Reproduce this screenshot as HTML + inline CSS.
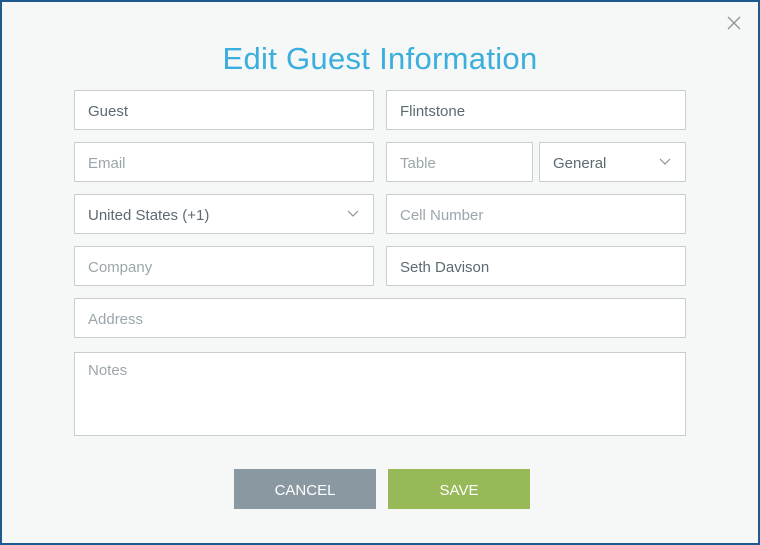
<!DOCTYPE html>
<html><head><style>
*{box-sizing:border-box;margin:0;padding:0}
body{width:760px;height:545px;background:#1d5a8e;font-family:"Liberation Sans",sans-serif;position:relative;overflow:hidden}
.m{position:absolute;left:2px;top:2px;width:756px;height:541px;background:#f6f8f8}
.t{position:absolute;left:0;width:760px;top:41px;text-align:center;font-size:31px;color:#3aaedc;font-weight:300;letter-spacing:0.3px}
.f{position:absolute;background:#fff;border:1px solid #c8cdcf;font-size:15px;color:#5c6a72;padding-left:13px;line-height:42px}
.p{color:#9ba6ac}
.ch{position:absolute;right:14px;top:15px;width:10px;height:10px}
.b{position:absolute;top:469px;height:40px;width:142px;color:#fff;font-size:15px;text-align:center;line-height:43px}
.x{position:absolute;left:727px;top:16px}
</style></head><body>
<div class="m"></div>
<svg class="x" width="14" height="14" viewBox="0 0 14 14"><path d="M1 1L13 13M13 1L1 13" stroke="#8a9499" stroke-width="1.3"/></svg>
<div class="t">Edit Guest Information</div>
<div class="f" style="left:74px;top:90px;width:300px;height:40px">Guest</div>
<div class="f" style="left:386px;top:90px;width:300px;height:40px">Flintstone</div>
<div class="f p" style="left:74px;top:142px;width:300px;height:40px">Email</div>
<div class="f p" style="left:386px;top:142px;width:147px;height:40px">Table</div>
<div class="f" style="left:539px;top:142px;width:147px;height:40px">General<svg class="ch" viewBox="0 0 12 8" style="width:12px;height:8px;top:15px"><path d="M1 1L6 6L11 1" fill="none" stroke="#8a9499" stroke-width="1.2"/></svg></div>
<div class="f" style="left:74px;top:194px;width:300px;height:40px">United States (+1)<svg class="ch" viewBox="0 0 12 8" style="width:12px;height:8px;top:15px"><path d="M1 1L6 6L11 1" fill="none" stroke="#8a9499" stroke-width="1.2"/></svg></div>
<div class="f p" style="left:386px;top:194px;width:300px;height:40px">Cell Number</div>
<div class="f p" style="left:74px;top:246px;width:300px;height:40px">Company</div>
<div class="f" style="left:386px;top:246px;width:300px;height:40px">Seth Davison</div>
<div class="f p" style="left:74px;top:298px;width:612px;height:40px">Address</div>
<div class="f p" style="left:74px;top:352px;width:612px;height:84px;line-height:36px">Notes</div>
<div class="b" style="left:234px;background:#8a99a1">CANCEL</div>
<div class="b" style="left:388px;background:#98b957">SAVE</div>
</body></html>
